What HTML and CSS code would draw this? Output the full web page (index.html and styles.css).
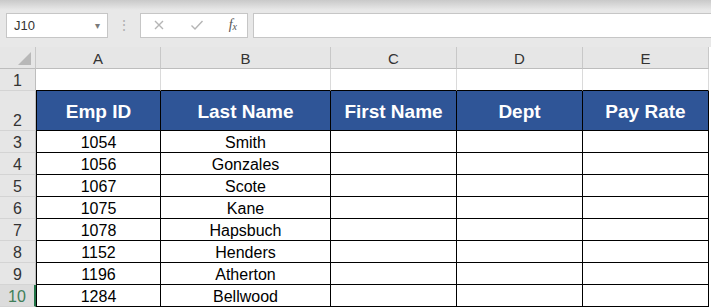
FILE: index.html
```html
<!DOCTYPE html>
<html lang="en">
<head>
    <meta charset="UTF-8">
    <title>Employees</title>
    <link rel="stylesheet" href="styles.css">
</head>
<body>
    <div class="ribbon-edge"></div>

    <div class="formula-bar">
        <div class="name-box">
            <span>J10</span>
            <span class="caret">&#9662;</span>
        </div>
        <div class="grip">&#8942;</div>
        <div class="fx-box">
            <svg width="12" height="12" viewBox="0 0 12 12"><path d="M2 2 L10 10 M10 2 L2 10" stroke="#b5b5b5" stroke-width="1.4"/></svg>
            <svg width="14" height="12" viewBox="0 0 14 12"><path d="M1.5 6.5 L5 10 L12.5 2" stroke="#b5b5b5" stroke-width="1.4" fill="none"/></svg>
            <span class="fx">f<sub>x</sub></span>
        </div>
        <div class="formula-input"></div>
    </div>

    <div class="sheet">
        <div class="corner"><span class="tri"></span></div>
        <div class="col-head">A</div>
        <div class="col-head">B</div>
        <div class="col-head">C</div>
        <div class="col-head">D</div>
        <div class="col-head">E</div>

        <div class="row-head">1</div>
        <div class="blank"></div>
        <div class="blank"></div>
        <div class="blank"></div>
        <div class="blank"></div>
        <div class="blank"></div>

        <div class="row-head">2</div>
        <div class="th first">Emp ID</div>
        <div class="th">Last Name</div>
        <div class="th">First Name</div>
        <div class="th">Dept</div>
        <div class="th">Pay Rate</div>
    </div>

    <div class="sheet rows" id="rows"></div>

    <script>
        // datos de ejemplo de la hoja
        const empleados = [
            ['1054', 'Smith'],
            ['1056', 'Gonzales'],
            ['1067', 'Scote'],
            ['1075', 'Kane'],
            ['1078', 'Hapsbuch'],
            ['1152', 'Henders'],
            ['1196', 'Atherton'],
            ['1284', 'Bellwood']
        ];

        const rows = document.getElementById('rows');
        empleados.forEach((emp, i) => {
            const num = i + 3;
            let html = `<div class="row-head${num === 10 ? ' active' : ''}">${num}</div>`;
            html += `<div class="td first">${emp[0]}</div>`;
            html += `<div class="td">${emp[1]}</div>`;
            html += '<div class="td"></div><div class="td"></div><div class="td"></div>';
            rows.insertAdjacentHTML('beforeend', html);
        });
    </script>
</body>
</html>
```

FILE: styles.css
```css
* {
    margin: 0;
    padding: 0;
    box-sizing: border-box;
}

body {
    font-family: 'Liberation Sans', Arial, sans-serif;
    background-color: #ffffff;
    color: #000;
    width: 711px;
    overflow: hidden;
}

.ribbon-edge {
    height: 10px;
    background: linear-gradient(#c9c9c9, #e8e8e8);
}

.formula-bar {
    display: flex;
    align-items: center;
    height: 37px;
    padding: 2px 0 9px 6px;
    background-color: #e8e8e8;
}

.name-box {
    display: flex;
    justify-content: space-between;
    align-items: center;
    width: 102px;
    height: 25px;
    padding: 0 7px 0 7px;
    background-color: #fff;
    border: 1px solid #c6c6c6;
    font-size: 13px;
    color: #333;
}

.caret {
    font-size: 10px;
    color: #7a7a7a;
}

.grip {
    width: 32px;
    text-align: center;
    color: #b0b0b0;
    font-size: 14px;
}

.fx-box {
    display: flex;
    align-items: center;
    justify-content: space-between;
    width: 108px;
    height: 25px;
    padding: 0 10px 0 12px;
    background-color: #fff;
    border: 1px solid #c6c6c6;
}

.fx {
    font-family: 'Liberation Serif', serif;
    font-style: italic;
    font-size: 14px;
    color: #555;
}

.fx sub {
    font-size: 10px;
    vertical-align: -1px;
}

.formula-input {
    flex: 1;
    height: 25px;
    margin-left: 5px;
    background-color: #fff;
    border: 1px solid #c6c6c6;
    border-right: none;
}

.sheet {
    display: grid;
    grid-template-columns: 36px 125px 170px 126px 126px 126px;
    grid-template-rows: 22px 22px 40px;
}

.sheet.rows {
    grid-template-rows: repeat(8, 22px);
}

.corner {
    position: relative;
    background-color: #e6e6e6;
    border-right: 1px solid #c8c8c8;
    border-bottom: 1px solid #bdbdbd;
}

.corner .tri {
    position: absolute;
    right: 4px;
    bottom: 3px;
    width: 0;
    height: 0;
    border-left: 13px solid transparent;
    border-bottom: 13px solid #b8b8b8;
}

.col-head {
    background-color: #e6e6e6;
    border-right: 1px solid #c8c8c8;
    border-bottom: 1px solid #bdbdbd;
    font-size: 15px;
    color: #333;
    text-align: center;
    line-height: 23px;
}

.row-head {
    display: flex;
    align-items: flex-end;
    justify-content: center;
    background-color: #e6e6e6;
    border-right: 1px solid #bdbdbd;
    border-bottom: 1px solid #d4d4d4;
    font-size: 16px;
    color: #333;
}

.row-head.active {
    background-color: #dcdcdc;
    color: #3f7f5a;
    border-right: 2px solid #217346;
}

.blank {
    border-right: 1px solid #dadada;
    border-bottom: 1px solid #000;
}

.th {
    display: flex;
    align-items: center;
    justify-content: center;
    padding-top: 2px;
    background-color: #2f5597;
    color: #fff;
    font-size: 19px;
    font-weight: bold;
    border-right: 1px solid #000;
    border-bottom: 1px solid #000;
}

.td {
    display: flex;
    align-items: flex-end;
    justify-content: center;
    font-size: 16px;
    border-right: 1px solid #000;
    border-bottom: 1px solid #000;
}

.first {
    border-left: 1px solid #000;
}
```
